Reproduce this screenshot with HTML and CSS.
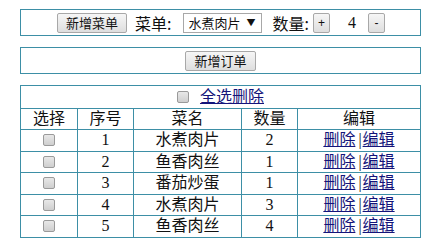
FILE: index.html
```html
<!DOCTYPE html>
<html>
<head>
<meta charset="utf-8">
<link rel="stylesheet" href="styles.css">
</head>
<body>
<div class="page">
  <div class="bar bar-menu">
    <button class="btn">新增菜单</button>
    <span class="label">菜单:</span>
    <span class="select">水煮肉片<span class="arrow">▼</span></span>
    <span class="label qty-label">数量:</span>
    <button class="btn small">+</button>
    <span class="num">4</span>
    <button class="btn small">-</button>
  </div>
  <div class="bar">
    <button class="btn">新增订单</button>
  </div>
  <table class="orders">
    <tr class="top-row">
      <td colspan="5"><span class="cb"></span><a href="#" class="link all">全选删除</a></td>
    </tr>
    <tr class="head">
      <td class="c1">选择</td><td class="c2">序号</td><td class="c3">菜名</td><td class="c4">数量</td><td class="c5">编辑</td>
    </tr>
    <tr><td><span class="cb"></span></td><td class="n">1</td><td>水煮肉片</td><td class="n">2</td><td><a href="#" class="link">删除</a><span class="sep">|</span><a href="#" class="link">编辑</a></td></tr>
    <tr><td><span class="cb"></span></td><td class="n">2</td><td>鱼香肉丝</td><td class="n">1</td><td><a href="#" class="link">删除</a><span class="sep">|</span><a href="#" class="link">编辑</a></td></tr>
    <tr><td><span class="cb"></span></td><td class="n">3</td><td>番茄炒蛋</td><td class="n">1</td><td><a href="#" class="link">删除</a><span class="sep">|</span><a href="#" class="link">编辑</a></td></tr>
    <tr><td><span class="cb"></span></td><td class="n">4</td><td>水煮肉片</td><td class="n">3</td><td><a href="#" class="link">删除</a><span class="sep">|</span><a href="#" class="link">编辑</a></td></tr>
    <tr><td><span class="cb"></span></td><td class="n">5</td><td>鱼香肉丝</td><td class="n">4</td><td><a href="#" class="link">删除</a><span class="sep">|</span><a href="#" class="link">编辑</a></td></tr>
  </table>
</div>
</body>
</html>
```
FILE: styles.css
```css
html, body {
  margin: 0;
  padding: 0;
  background: #ffffff;
}
body {
  font-family: "Liberation Serif", "Noto Sans CJK SC", serif;
  font-size: 16px;
  color: #111;
}
.page {
  width: 401px;
  padding: 9px 0 0 20px;
  display: flex;
  flex-direction: column;
  gap: 11px;
}
.bar {
  box-sizing: border-box;
  height: 27px;
  border: 1px solid #3d8fa6;
  display: flex;
  align-items: center;
  justify-content: center;
}
.bar-menu {
  justify-content: flex-start;
  padding-left: 36px;
}
.btn {
  box-sizing: border-box;
  height: 20px;
  padding: 0 8px;
  font-family: "Noto Sans CJK SC", sans-serif;
  font-size: 13px;
  line-height: 18px;
  color: #111;
  border: 1px solid #a8a8a8;
  border-radius: 2px;
  background: linear-gradient(#f6f6f6, #dedede);
  margin: 0;
}
.btn.small {
  width: 17px;
  padding: 0;
  font-family: "Liberation Sans", sans-serif;
  font-size: 12px;
}
.label {
  font-family: "Noto Sans CJK SC", sans-serif;
  font-size: 16px;
  margin: 0 12px 0 8px;
  line-height: 20px;
}
.qty-label {
  margin: 0 4px 0 10px;
}
.select {
  box-sizing: border-box;
  width: 79px;
  height: 20px;
  border: 1px solid #a8a8a8;
  font-family: "Noto Sans CJK SC", sans-serif;
  font-size: 13px;
  line-height: 18px;
  padding-left: 4px;
  display: flex;
  justify-content: space-between;
  align-items: center;
}
.arrow {
  font-size: 9px;
  padding-right: 6px;
}
.num {
  font-family: "Liberation Serif", serif;
  font-size: 16px;
  margin: 0 12px 0 18px;
}
.orders {
  width: 401px;
  border-collapse: collapse;
  border: 1px solid #3d8fa6;
  font-family: "Liberation Serif", "Noto Sans CJK SC", serif;
  font-size: 16px;
}
.orders td {
  border: 1px solid #3d8fa6;
  text-align: center;
  padding: 0;
  height: 20.5px;
  line-height: 18px;
}
.orders .top-row td {
  height: 22px;
}
.orders .head td {
  height: 20px;
}
.c1 { width: 56px; }
.c2 { width: 55px; }
.c3 { width: 107px; }
.c4 { width: 55px; }
.c5 { width: auto; }
.cb {
  display: inline-block;
  box-sizing: border-box;
  width: 12px;
  height: 12px;
  border: 1px solid #9a9a9a;
  border-radius: 2px;
  background: linear-gradient(#e8e8e8, #cfcfcf);
  vertical-align: -1px;
}
.top-row .cb {
  margin-right: 11px;
}
.link {
  color: #14147a;
  text-decoration: underline;
}
.sep {
  margin: 0 1px 0 3px;
}
```
